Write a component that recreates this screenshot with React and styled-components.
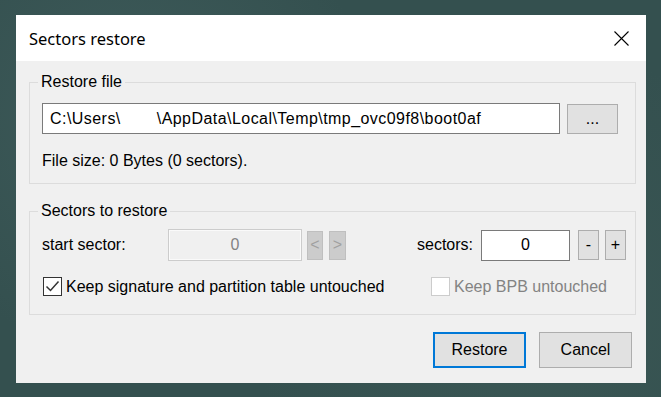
import React from 'react'
import styled, { createGlobalStyle } from 'styled-components'

const GlobalStyle = createGlobalStyle`
  html, body {
    margin: 0;
    padding: 0;
    background: #34504f;
  }
  body {
    font-family: "Liberation Sans", Arial, sans-serif;
    font-size: 16px;
    color: #000;
  }
`;

const Page = styled.div`
  min-height: 397px;
  padding: 15px 0 0 16px;
  box-sizing: border-box;
  background:
    radial-gradient(circle at 20% 30%, rgba(80, 110, 110, 0.35), transparent 40%),
    radial-gradient(circle at 80% 80%, rgba(70, 100, 95, 0.35), transparent 45%),
    #34504f;
`;

const Dialog = styled.div`
  width: 630px;
  background: #f0f0f0;
  box-sizing: border-box;
`;

const TitleBar = styled.div`
  height: 46px;
  background: #fff;
  display: flex;
  align-items: center;
  justify-content: space-between;
  padding: 0 17px 0 13px;
  font-family: "Noto Sans", "Open Sans", sans-serif;
  font-size: 16.5px;
`;

const CloseIcon = () => (
  <svg width="15" height="15" viewBox="0 0 15 15">
    <path d="M0.5 0.5 L14.5 14.5 M14.5 0.5 L0.5 14.5" stroke="#000" strokeWidth="1.1" />
  </svg>
);

const Body = styled.div`
  display: flex;
  flex-direction: column;
  padding: 13px 10px 15px 13px;
`;

const GroupBox = styled.fieldset`
  margin: ${p => p.$top || 0}px 0 0 0;
  padding: 0;
  border: 1px solid #dcdcdc;
  min-width: 0;
`;

const Legend = styled.legend`
  margin-left: 8px;
  padding: 0 3px;
  line-height: 16px;
  font-size: 16px;
`;

const GroupContent = styled.div`
  padding: ${p => p.$pad};
`;

const Row = styled.div`
  display: flex;
  align-items: center;
  margin-top: ${p => p.$top || 0}px;
`;

const PathInput = styled.div`
  flex: 1;
  height: 31px;
  box-sizing: border-box;
  border: 1px solid #7a7a7a;
  background: #fff;
  padding: 0 7px;
  display: flex;
  align-items: center;
  white-space: nowrap;
  overflow: hidden;
  letter-spacing: 0.45px;
`;

const Hidden = styled.span`
  display: inline-block;
  width: 36px;
`;

const Button = styled.div`
  box-sizing: border-box;
  width: ${p => p.$w}px;
  height: ${p => p.$h}px;
  margin-left: ${p => p.$ml || 0}px;
  background: ${p => (p.$disabled ? '#cccccc' : '#e1e1e1')};
  border: ${p => (p.$primary ? '2px solid #0078d7' : p.$disabled ? '1px solid #bfbfbf' : '1px solid #adadad')};
  color: ${p => (p.$disabled ? '#a0a0a0' : '#000')};
  display: flex;
  align-items: center;
  justify-content: center;
  flex-shrink: 0;
`;

const InfoText = styled.div`
  margin-top: 19px;
  line-height: 16px;
`;

const FieldLabel = styled.span`
  width: ${p => p.$w ? `${p.$w}px` : 'auto'};
  margin-left: ${p => (p.$auto ? 'auto' : '0')};
  margin-right: ${p => p.$mr || 0}px;
`;

const NumberInput = styled.div`
  box-sizing: border-box;
  width: ${p => p.$w}px;
  height: ${p => p.$h}px;
  border: 1px solid ${p => (p.$disabled ? '#cccccc' : '#7a7a7a')};
  box-shadow: ${p => (p.$disabled ? 'inset 0 0 0 1px #fafafa' : 'none')};
  background: ${p => (p.$disabled ? '#f0f0f0' : '#fff')};
  color: ${p => (p.$disabled ? '#838383' : '#000')};
  display: flex;
  align-items: center;
  justify-content: center;
`;

const CheckItem = styled.label`
  display: flex;
  align-items: center;
  width: ${p => p.$w ? `${p.$w}px` : 'auto'};
  color: ${p => (p.$disabled ? '#838383' : '#000')};
`;

const Box = styled.span`
  box-sizing: border-box;
  width: 19px;
  height: 19px;
  margin: 0 4px 0 1px;
  border: 1px solid ${p => (p.$disabled ? '#cccccc' : '#333333')};
  background: #fff;
  display: flex;
  align-items: center;
  justify-content: center;
`;

const Check = ({ checked, disabled }) => (
  <Box $disabled={disabled}>
    {checked && (
      <svg width="17" height="17" viewBox="0 0 17 17">
        <path d="M2.5 8.5 L6.5 12.5 L14.5 3.5" fill="none" stroke="#333" strokeWidth="1.5" />
      </svg>
    )}
  </Box>
);

const ButtonRow = styled.div`
  display: flex;
  justify-content: flex-end;
  gap: 13px;
  margin: 17px 4px 0 0;
`;

export default function App() {
  return (
    <Page>
      <GlobalStyle />
      <Dialog>
        <TitleBar>
          <span>Sectors restore</span>
          <CloseIcon />
        </TitleBar>
        <Body>
          <GroupBox>
            <Legend>Restore file</Legend>
            <GroupContent $pad="13px 17px 14px 12px">
              <Row>
                <PathInput>
                  {'C:\\Users\\'}<Hidden />{'\\AppData\\Local\\Temp\\tmp_ovc09f8\\boot0af'}
                </PathInput>
                <Button $w={51} $h={30} $ml={7}>...</Button>
              </Row>
              <InfoText>File size: 0 Bytes (0 sectors).</InfoText>
            </GroupContent>
          </GroupBox>
          <GroupBox $top={19}>
            <Legend>Sectors to restore</Legend>
            <GroupContent $pad="10px 9px 18px 12px">
              <Row>
                <FieldLabel $w={126}>start sector:</FieldLabel>
                <NumberInput $w={134} $h={32} $disabled>0</NumberInput>
                <Button $w={16} $h={29} $ml={5} $disabled>&lt;</Button>
                <Button $w={17} $h={29} $ml={6} $disabled>&gt;</Button>
                <FieldLabel $auto $mr={8}>sectors:</FieldLabel>
                <NumberInput $w={89} $h={31}>0</NumberInput>
                <Button $w={21} $h={30} $ml={8}>-</Button>
                <Button $w={21} $h={30} $ml={6}>+</Button>
              </Row>
              <Row $top={16}>
                <CheckItem $w={388}>
                  <Check checked />
                  Keep signature and partition table untouched
                </CheckItem>
                <CheckItem $disabled>
                  <Check disabled />
                  Keep BPB untouched
                </CheckItem>
              </Row>
            </GroupContent>
          </GroupBox>
          <ButtonRow>
            <Button $w={93} $h={36} $primary>Restore</Button>
            <Button $w={93} $h={36}>Cancel</Button>
          </ButtonRow>
        </Body>
      </Dialog>
    </Page>
  );
}
